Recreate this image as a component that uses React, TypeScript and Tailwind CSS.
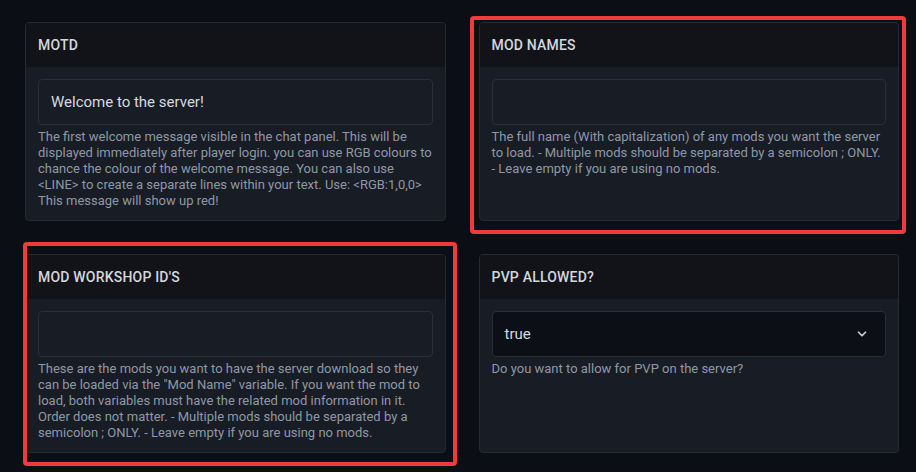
import React from 'react';
import { ChevronDown } from 'lucide-react';

interface VariableCardProps {
    title: string;
    description: string;
    value?: string;
    select?: boolean;
    highlight?: string;
}

const VariableCard: React.FC<VariableCardProps> = ({ title, description, value = '', select, highlight }) => {
    return (
        <div className="relative h-[199px]">
            <div className="flex h-full flex-col overflow-hidden rounded-[4px] border border-[#262a32] bg-[#181c25]">
                <div className="flex h-[44px] shrink-0 items-center bg-[#111319] px-3">
                    <h3 className="text-[14px] font-medium tracking-[0.2px] text-[#d3d7de]">{title}</h3>
                </div>
                <div className="px-3 pt-3">
                    {select ? (
                        <div className="flex h-[46px] items-center justify-between rounded-[4px] border border-[#2a2e36] bg-[#0c0f16] pl-3 pr-4">
                            <span className="text-[15px] text-[#d6dae0]">{value}</span>
                            <ChevronDown className="h-[14px] w-[14px] text-[#c9ced6]" strokeWidth={3} />
                        </div>
                    ) : (
                        <div className="flex h-[46px] items-center rounded-[4px] border border-[#2a2e36] px-3">
                            <span className="text-[15px] text-[#d6dae0]">{value}</span>
                        </div>
                    )}
                    <p className="mt-[4px] text-[13px] leading-[16px] text-[#8f98a6]">{description}</p>
                </div>
            </div>
            {highlight && <div className={`pointer-events-none absolute rounded-[4px] border-4 border-[#ef3b3b] ${highlight}`} />}
        </div>
    );
};

export default function App() {
    return (
        <div className="min-h-[472px] bg-[#0b0e15] pl-[25px] pr-[17px] pt-[22px]" style={{ fontFamily: 'Roboto, "Noto Sans", sans-serif' }}>
            <div className="grid grid-cols-2 gap-[33px]">
                <VariableCard
                    title="MOTD"
                    value="Welcome to the server!"
                    description="The first welcome message visible in the chat panel. This will be displayed immediately after player login. you can use RGB colours to chance the colour of the welcome message. You can also use <LINE> to create a separate lines within your text. Use: <RGB:1,0,0> This message will show up red!"
                />
                <VariableCard
                    title="MOD NAMES"
                    description="The full name (With capitalization) of any mods you want the server to load. - Multiple mods should be separated by a semicolon ; ONLY. - Leave empty if you are using no mods."
                    highlight="-top-[6px] -left-[9px] -right-[7px] -bottom-[13px]"
                />
                <VariableCard
                    title="MOD WORKSHOP ID'S"
                    description={'These are the mods you want to have the server download so they can be loaded via the "Mod Name" variable. If you want the mod to load, both variables must have the related mod information in it. Order does not matter. - Multiple mods should be separated by a semicolon ; ONLY. - Leave empty if you are using no mods.'}
                    highlight="-top-[12px] -left-[2px] -right-[11px] -bottom-[13px]"
                />
                <VariableCard
                    title="PVP ALLOWED?"
                    value="true"
                    select
                    description="Do you want to allow for PVP on the server?"
                />
            </div>
        </div>
    );
}
